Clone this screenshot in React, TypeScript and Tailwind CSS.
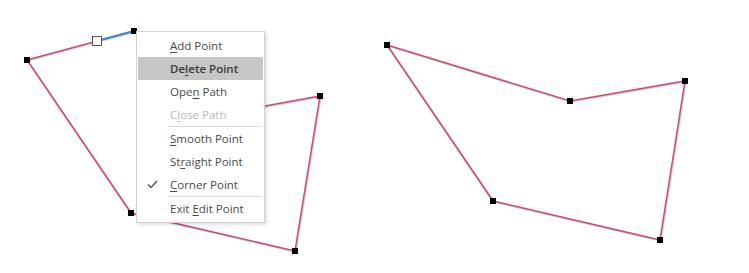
import React from 'react';

type Pt = [number, number];

const leftShape: Pt[] = [
  [27, 60],
  [134, 31],
  [210, 116],
  [320, 96],
  [295, 251],
  [131, 213],
];

const rightShape: Pt[] = [
  [387, 45],
  [570, 101],
  [685, 81],
  [660, 240],
  [493, 201],
];

const toPoints = (pts: Pt[]) => pts.map(p => p.join(',')).join(' ');

const Handle = ({ p }: { p: Pt }) => (
  <rect x={p[0] - 3} y={p[1] - 3} width={6} height={6} fill="#000" />
);

interface MenuItem {
  label: React.ReactNode;
  active?: boolean;
  disabled?: boolean;
  checked?: boolean;
  separatorBefore?: boolean;
}

const U = ({ children }: { children: React.ReactNode }) => <span className="underline underline-offset-2">{children}</span>;

const items: MenuItem[] = [
  { label: <><U>A</U>dd Point</> },
  { label: <>De<U>l</U>ete Point</>, active: true },
  { label: <>Ope<U>n</U> Path</> },
  { label: <>C<U>l</U>ose Path</>, disabled: true },
  { label: <><U>S</U>mooth Point</>, separatorBefore: true },
  { label: <>St<U>r</U>aight Point</> },
  { label: <><U>C</U>orner Point</>, checked: true },
  { label: <>Exit <U>E</U>dit Point</>, separatorBefore: true },
];

const ContextMenu = () => (
  <div className="absolute left-[136px] top-[31px] w-[129px] border border-[#d2d2d2] bg-white py-[2px] shadow-[2px_2px_3px_rgba(0,0,0,0.12)]">
    {items.map((item, i) => (
      <React.Fragment key={i}>
        {item.separatorBefore && <div className="ml-[31px] mr-[2px] h-px bg-[#dcdcdc]" />}
        <div
          className={
            'relative mx-[1px] flex h-[23px] items-center pl-[32px] text-[11.5px] ' +
            (item.active ? 'bg-[#c6c6c6] font-semibold text-[#3a3a3a]' : '') +
            (item.disabled ? ' text-[#b8b8b8]' : '') +
            (!item.active && !item.disabled ? ' text-[#4a4a4a]' : '')
          }
        >
          {item.checked && (
            <svg className="absolute left-[9px] top-[7px]" width="11" height="9" viewBox="0 0 11 9">
              <path d="M1 4.5 L4 7.5 L10 1" fill="none" stroke="#555" strokeWidth="1.4" />
            </svg>
          )}
          <span className="whitespace-pre">{item.label}</span>
        </div>
      </React.Fragment>
    ))}
  </div>
);

export default function App() {
  return (
    <div className="relative h-[273px] w-[749px] overflow-hidden bg-white font-['Open_Sans',sans-serif]">
      <svg className="absolute inset-0" width="749" height="273" viewBox="0 0 749 273">
        {[leftShape, rightShape].map((s, i) => (
          <g key={i}>
            <polygon points={toPoints(s)} fill="none" stroke="#a8cdf2" strokeWidth="2" strokeOpacity="0.8" transform="translate(0.8,0.8)" />
            <polygon points={toPoints(s)} fill="none" stroke="#e0475c" strokeWidth="1.5" />
          </g>
        ))}
        {/* selected segment */}
        <line x1="97" y1="41" x2="134" y2="31" stroke="#4a86c8" strokeWidth="2" />
        {leftShape.map((p, i) => (i === 2 ? null : <Handle key={i} p={p} />))}
        {rightShape.map((p, i) => (
          <Handle key={i} p={p} />
        ))}
        <rect x="92.5" y="36.5" width="9" height="9" fill="#fff" stroke="#555" strokeWidth="1" />
      </svg>
      <ContextMenu />
    </div>
  );
}
